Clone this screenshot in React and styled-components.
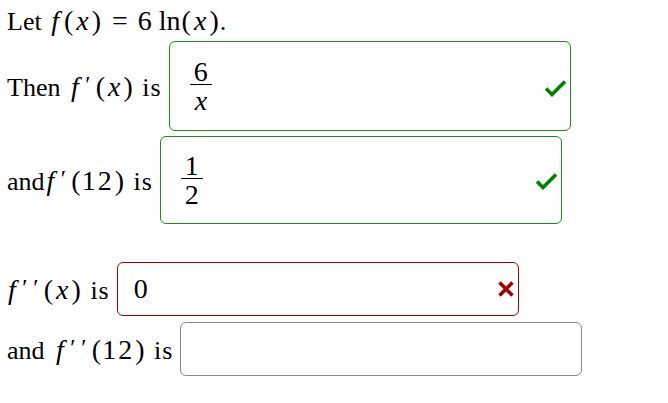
import styled, { createGlobalStyle } from 'styled-components';

const GlobalStyle = createGlobalStyle`
  html, body {
    margin: 0;
    padding: 0;
    background: #ffffff;
  }
  body {
    font-family: "Liberation Serif", "Times New Roman", serif;
    color: #000000;
  }
`;

const Page = styled.div`
  width: 668px;
  height: 403px;
  padding: 0 0 0 7px;
  box-sizing: border-box;
  font-size: 26px;
  overflow: hidden;
`;

const Intro = styled.div`
  height: 35px;
  line-height: 35px;
  margin: 3px 0 3px 0;
  white-space: nowrap;
`;

const Group = styled.div`
  display: flex;
  flex-direction: column;
  gap: ${(p) => p.$gap}px;
  margin-bottom: ${(p) => p.$after || 0}px;
`;

const Row = styled.div`
  display: flex;
  align-items: center;
  gap: 7px;
  white-space: nowrap;
`;

const Label = styled.span`
  line-height: 30px;
`;

const Word = styled.span`
  letter-spacing: ${(p) => p.$ls ?? 0}px;
  margin: 0 ${(p) => p.$r ?? 0}px 0 ${(p) => p.$l ?? 0}px;
`;

/* math set a bit larger and wider, like MathJax output */
const M = styled.span`
  font-size: 28px;
  margin: 0 ${(p) => p.$r ?? 0}px 0 ${(p) => p.$l ?? 0}px;
`;

const V = styled.span`
  font-style: italic;
  padding: 0 ${(p) => p.$r ?? 2}px 0 ${(p) => p.$l ?? 2}px;
`;

const Paren = styled.span`
  padding: 0 1px;
`;

const Digits = styled.span`
  letter-spacing: 2px;
`;

const Tick = styled.span`
  display: inline-block;
  width: 11px;
  text-align: left;
  font-size: 24px;
  font-style: italic;
  vertical-align: 4px;
`;

const Op = styled.span`
  margin: 0 ${(p) => p.$m}px;
`;

const BORDER = {
  correct: '#159115',
  wrong: '#a00000',
  empty: '#8a8a8a',
};

const Box = styled.div`
  display: flex;
  align-items: center;
  justify-content: space-between;
  box-sizing: border-box;
  width: 402px;
  height: ${(p) => p.$h}px;
  padding: 0 3px 0 ${(p) => p.$pad}px;
  border: 1px solid ${(p) => BORDER[p.$state]};
  border-radius: 6px;
  background: #ffffff;
`;

const Frac = styled.span`
  display: inline-flex;
  flex-direction: column;
  align-items: center;
  font-size: 28px;
  line-height: 24px;
`;

const Num = styled.span`
  padding: 0 4px 0;
  border-bottom: 1.5px solid #000;
`;

const Den = styled.span`
  padding: 4px 3px 0;
`;

const Value = styled.span`
  font-size: 28px;
  line-height: 28px;
`;

const Icon = styled.svg`
  flex: none;
  margin-top: ${(p) => p.$dy || 0}px;
`;

function Check({ dy }) {
  return (
    <Icon width="23" height="18" viewBox="0 0 23 18" $dy={dy}>
      <path d="M2 9.5 L8 15.5 L21 2.5" fill="none" stroke="#008000" strokeWidth="3.6" />
    </Icon>
  );
}

function Cross() {
  return (
    <Icon width="18" height="18" viewBox="0 0 18 18">
      <path d="M2.5 2.5 L15.5 15.5 M15.5 2.5 L2.5 15.5" fill="none" stroke="#a00000" strokeWidth="3.6" />
    </Icon>
  );
}

function F({ primes = 0, l = 2 }) {
  return (
    <>
      <V $l={l} $r={primes ? 5 : 4}>f</V>
      {Array.from({ length: primes }, (_, i) => (
        <Tick key={i}>′</Tick>
      ))}
    </>
  );
}

function Arg({ children }) {
  return (
    <>
      <Paren>(</Paren>
      {children}
      <Paren>)</Paren>
    </>
  );
}

export default function App() {
  return (
    <>
      <GlobalStyle />
      <Page>
        <Intro>
          Let{' '}
          <M>
            <F l={3} />
            <Arg><V>x</V></Arg>
            <Op $m={10}>=</Op>6 ln<Arg><V>x</V></Arg>
          </M>
          .
        </Intro>

        <Group $gap={5} $after={38}>
          <Row>
            <Label>
              Then{' '}
              <M $l={2} $r={2}>
                <F primes={1} />
                <Arg><V>x</V></Arg>
              </M>{' '}
              <Word $ls={1}>is</Word>
            </Label>
            <Box $state="correct" $h={90} $pad={20}>
              <Frac>
                <Num>6</Num>
                <Den><V>x</V></Den>
              </Frac>
              <Check dy={4} />
            </Box>
          </Row>
          <Row>
            <Label>
              and
              <M $r={2}>
                <F primes={1} />
                <Arg><Digits>12</Digits></Arg>
              </M>{' '}
              <Word $ls={1}>is</Word>
            </Label>
            <Box $state="correct" $h={88} $pad={20}>
              <Frac>
                <Num>1</Num>
                <Den>2</Den>
              </Frac>
              <Check dy={2} />
            </Box>
          </Row>
        </Group>

        <Group $gap={6}>
          <Row>
            <Label>
              <M $r={2}>
                <F primes={2} l={1} />
                <Arg><V>x</V></Arg>
              </M>{' '}
              <Word $ls={1}>is</Word>
            </Label>
            <Box $state="wrong" $h={54} $pad={16}>
              <Value>0</Value>
              <Cross />
            </Box>
          </Row>
          <Row>
            <Label>
              and{' '}
              <M $l={3} $r={2}>
                <F primes={2} />
                <Arg><Digits>12</Digits></Arg>
              </M>{' '}
              <Word $ls={1}>is</Word>
            </Label>
            <Box $state="empty" $h={54} $pad={16} />
          </Row>
        </Group>
      </Page>
    </>
  );
}
